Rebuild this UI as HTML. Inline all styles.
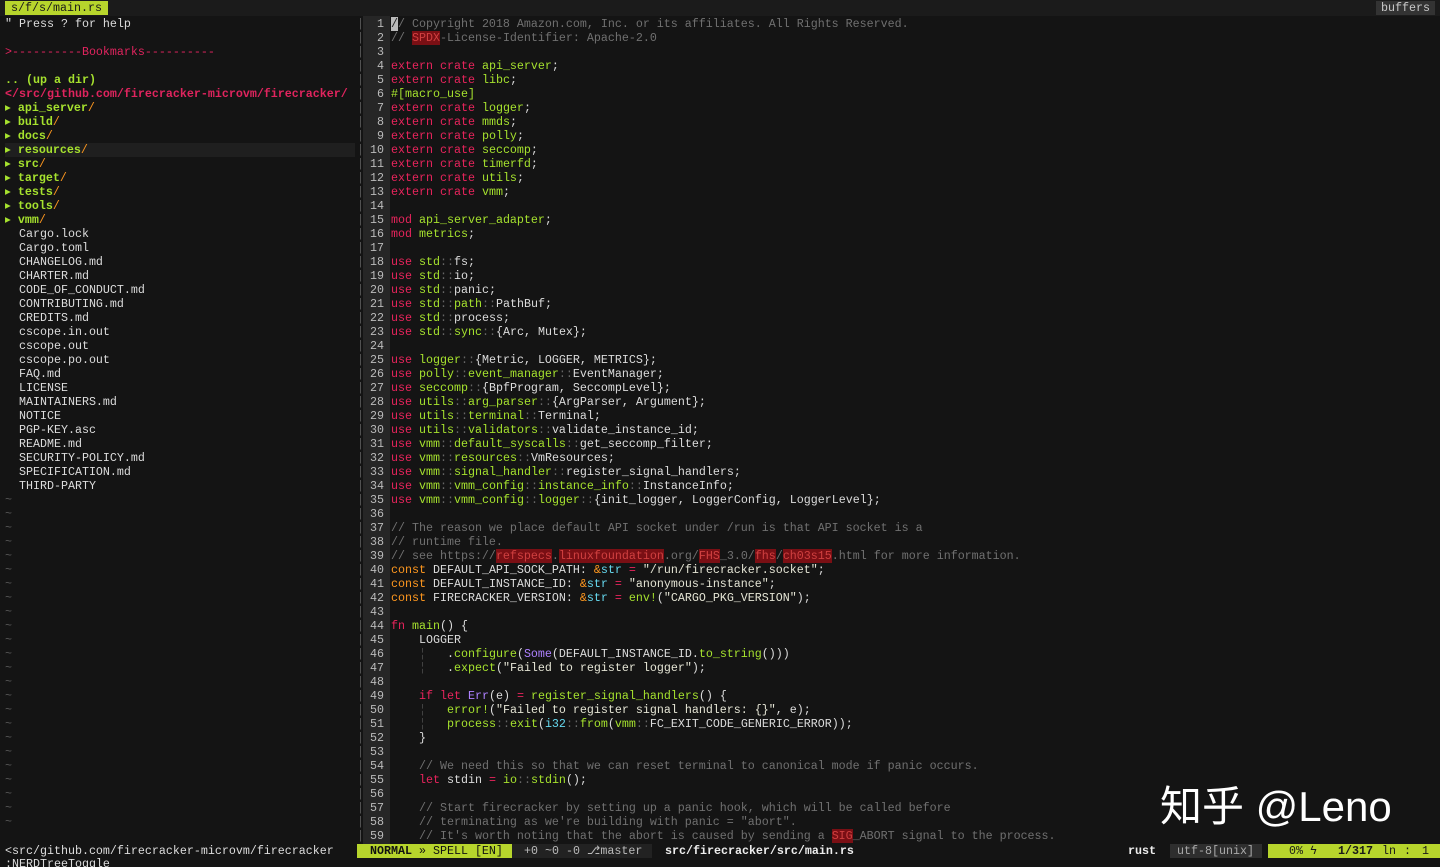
<!DOCTYPE html>
<html><head><meta charset="utf-8">
<style>
*{margin:0;padding:0;box-sizing:border-box}
html,body{width:1440px;height:867px;overflow:hidden;background:#141414}
body{position:relative;font-family:"Liberation Mono",monospace;font-size:11.67px;color:#dcdcdc}
pre{font-family:inherit;font-size:inherit;line-height:14px;position:absolute;white-space:pre}
#tab{position:absolute;left:0;top:0;width:1440px;height:16px;background:#1b1b1b}
.tabl{position:absolute;left:5px;top:1px;height:14px;line-height:14px;padding:0 6px;background:#b7d52c;color:#1a1a1a}
.buf{position:absolute;right:5px;top:1px;height:14px;line-height:14px;padding:0 5px;background:#333;color:#c8c8c8}
#tree{left:5px;top:17px}
#sep{left:357px;top:17px;color:#555}
#nums{left:363px;top:16px;width:27px;background:#262626;color:#bbb;text-align:right;padding-right:6px;padding-top:1px;height:828px}
#code{left:391px;top:17px}
.k{color:#e8245c}.g{color:#a6e22e}.o{color:#fd971f}.c{color:#707070}.b{color:#66d9ef}.p{color:#ae81ff}.s{color:#e4e4d4}.d{color:#666}.e{background:#7a0f14;color:#d04040}
.dir{color:#a6e22e;font-weight:bold}.sl{color:#fd971f}.pk{color:#e0245e}.tl{color:#555}.gd{color:#444}
.sel{background:#1f1f1f;display:inline-block;width:350px}
#status{position:absolute;left:0;top:844px;width:1440px;height:14px;line-height:14px}
#status span{position:absolute;top:0;height:14px}
.wm{position:absolute;left:1160px;top:780px;font-family:"Liberation Sans","Noto Sans CJK SC",sans-serif;font-size:42px;color:#fff;line-height:54px}
</style></head><body>
<div id="tab"><span class="tabl">s/f/s/main.rs</span><span class="buf">buffers</span></div>
<pre id="tree">" Press ? for help

<span class="pk">&gt;----------Bookmarks----------</span>

<span class="dir">.. (up a dir)</span>
<span class="pk" style="font-weight:bold">&lt;/src/github.com/firecracker-microvm/firecracker/</span>
<span class="g">▸</span> <span class="dir">api_server</span><span class="sl">/</span>
<span class="g">▸</span> <span class="dir">build</span><span class="sl">/</span>
<span class="g">▸</span> <span class="dir">docs</span><span class="sl">/</span>
<span class="sel"><span class="g">▸</span> <span class="dir">resources</span><span class="sl">/</span></span>
<span class="g">▸</span> <span class="dir">src</span><span class="sl">/</span>
<span class="g">▸</span> <span class="dir">target</span><span class="sl">/</span>
<span class="g">▸</span> <span class="dir">tests</span><span class="sl">/</span>
<span class="g">▸</span> <span class="dir">tools</span><span class="sl">/</span>
<span class="g">▸</span> <span class="dir">vmm</span><span class="sl">/</span>
  Cargo.lock
  Cargo.toml
  CHANGELOG.md
  CHARTER.md
  CODE_OF_CONDUCT.md
  CONTRIBUTING.md
  CREDITS.md
  cscope.in.out
  cscope.out
  cscope.po.out
  FAQ.md
  LICENSE
  MAINTAINERS.md
  NOTICE
  PGP-KEY.asc
  README.md
  SECURITY-POLICY.md
  SPECIFICATION.md
  THIRD-PARTY
<span class="tl">~
~
~
~
~
~
~
~
~
~
~
~
~
~
~
~
~
~
~
~
~
~
~
~</span></pre>
<pre style="left:5px;top:844px;color:#ddd">&lt;src/github.com/firecracker-microvm/firecracker</pre>
<pre style="left:5px;top:857px;color:#ddd">:NERDTreeToggle</pre>
<pre id="sep">|
|
|
|
|
|
|
|
|
|
|
|
|
|
|
|
|
|
|
|
|
|
|
|
|
|
|
|
|
|
|
|
|
|
|
|
|
|
|
|
|
|
|
|
|
|
|
|
|
|
|
|
|
|
|
|
|
|
|</pre>
<pre id="nums">1
2
3
4
5
6
7
8
9
10
11
12
13
14
15
16
17
18
19
20
21
22
23
24
25
26
27
28
29
30
31
32
33
34
35
36
37
38
39
40
41
42
43
44
45
46
47
48
49
50
51
52
53
54
55
56
57
58
59</pre>
<pre id="code"><span style="background:#bbb;color:#222">/</span><span class="c">/ Copyright 2018 Amazon.com, Inc. or its affiliates. All Rights Reserved.</span>
<span class="c">// <span class="e">SPDX</span>-License-Identifier: Apache-2.0</span>

<span class="k">extern crate</span> <span class="g">api_server</span>;
<span class="k">extern crate</span> <span class="g">libc</span>;
<span class="g">#[macro_use]</span>
<span class="k">extern crate</span> <span class="g">logger</span>;
<span class="k">extern crate</span> <span class="g">mmds</span>;
<span class="k">extern crate</span> <span class="g">polly</span>;
<span class="k">extern crate</span> <span class="g">seccomp</span>;
<span class="k">extern crate</span> <span class="g">timerfd</span>;
<span class="k">extern crate</span> <span class="g">utils</span>;
<span class="k">extern crate</span> <span class="g">vmm</span>;

<span class="k">mod</span> <span class="g">api_server_adapter</span>;
<span class="k">mod</span> <span class="g">metrics</span>;

<span class="k">use</span> <span class="g">std</span><span class="d">::</span>fs;
<span class="k">use</span> <span class="g">std</span><span class="d">::</span>io;
<span class="k">use</span> <span class="g">std</span><span class="d">::</span>panic;
<span class="k">use</span> <span class="g">std</span><span class="d">::</span><span class="g">path</span><span class="d">::</span>PathBuf;
<span class="k">use</span> <span class="g">std</span><span class="d">::</span>process;
<span class="k">use</span> <span class="g">std</span><span class="d">::</span><span class="g">sync</span><span class="d">::</span>{Arc, Mutex};

<span class="k">use</span> <span class="g">logger</span><span class="d">::</span>{Metric, LOGGER, METRICS};
<span class="k">use</span> <span class="g">polly</span><span class="d">::</span><span class="g">event_manager</span><span class="d">::</span>EventManager;
<span class="k">use</span> <span class="g">seccomp</span><span class="d">::</span>{BpfProgram, SeccompLevel};
<span class="k">use</span> <span class="g">utils</span><span class="d">::</span><span class="g">arg_parser</span><span class="d">::</span>{ArgParser, Argument};
<span class="k">use</span> <span class="g">utils</span><span class="d">::</span><span class="g">terminal</span><span class="d">::</span>Terminal;
<span class="k">use</span> <span class="g">utils</span><span class="d">::</span><span class="g">validators</span><span class="d">::</span>validate_instance_id;
<span class="k">use</span> <span class="g">vmm</span><span class="d">::</span><span class="g">default_syscalls</span><span class="d">::</span>get_seccomp_filter;
<span class="k">use</span> <span class="g">vmm</span><span class="d">::</span><span class="g">resources</span><span class="d">::</span>VmResources;
<span class="k">use</span> <span class="g">vmm</span><span class="d">::</span><span class="g">signal_handler</span><span class="d">::</span>register_signal_handlers;
<span class="k">use</span> <span class="g">vmm</span><span class="d">::</span><span class="g">vmm_config</span><span class="d">::</span><span class="g">instance_info</span><span class="d">::</span>InstanceInfo;
<span class="k">use</span> <span class="g">vmm</span><span class="d">::</span><span class="g">vmm_config</span><span class="d">::</span><span class="g">logger</span><span class="d">::</span>{init_logger, LoggerConfig, LoggerLevel};

<span class="c">// The reason we place default API socket under /run is that API socket is a</span>
<span class="c">// runtime file.</span>
<span class="c">// see https://<span class="e">refspecs</span>.<span class="e">linuxfoundation</span>.org/<span class="e">FHS</span>_3.0/<span class="e">fhs</span>/<span class="e">ch03s15</span>.html for more information.</span>
<span class="o">const</span> DEFAULT_API_SOCK_PATH: <span class="o">&amp;</span><span class="b">str</span> <span class="k">=</span> <span class="s">"/run/firecracker.socket"</span>;
<span class="o">const</span> DEFAULT_INSTANCE_ID: <span class="o">&amp;</span><span class="b">str</span> <span class="k">=</span> <span class="s">"anonymous-instance"</span>;
<span class="o">const</span> FIRECRACKER_VERSION: <span class="o">&amp;</span><span class="b">str</span> <span class="k">=</span> <span class="g">env!</span>(<span class="s">"CARGO_PKG_VERSION"</span>);

<span class="k">fn</span> <span class="g">main</span>() {
    LOGGER
    <span class="gd">¦</span>   .<span class="g">configure</span>(<span class="p">Some</span>(DEFAULT_INSTANCE_ID.<span class="g">to_string</span>()))
    <span class="gd">¦</span>   .<span class="g">expect</span>(<span class="s">"Failed to register logger"</span>);

    <span class="k">if let</span> <span class="p">Err</span>(e) <span class="k">=</span> <span class="g">register_signal_handlers</span>() {
    <span class="gd">¦</span>   <span class="g">error!</span>(<span class="s">"Failed to register signal handlers: {}"</span>, e);
    <span class="gd">¦</span>   <span class="g">process</span><span class="d">::</span><span class="g">exit</span>(<span class="b">i32</span><span class="d">::</span><span class="g">from</span>(<span class="g">vmm</span><span class="d">::</span>FC_EXIT_CODE_GENERIC_ERROR));
    }

    <span class="c">// We need this so that we can reset terminal to canonical mode if panic occurs.</span>
    <span class="k">let</span> stdin <span class="k">=</span> <span class="g">io</span><span class="d">::</span><span class="g">stdin</span>();

    <span class="c">// Start firecracker by setting up a panic hook, which will be called before</span>
    <span class="c">// terminating as we're building with panic = "abort".</span>
    <span class="c">// It's worth noting that the abort is caused by sending a <span class="e">SIG</span>_ABORT signal to the process.</span></pre>
<div id="status">
<span style="left:357px;width:155px;background:#b7d52c;color:#111;padding-left:13px"><b>NORMAL</b> » SPELL [EN]</span>
<span style="left:512px;width:140px;background:#222;color:#bbb;padding-left:12px">+0 ~0 -0 ⎇master</span>
<span style="left:665px;color:#eee;font-weight:bold">src/firecracker/src/main.rs</span>
<span style="left:1128px;color:#eee;font-weight:bold">rust</span>
<span style="left:1170px;width:92px;background:#2e2e2e;color:#aaa;padding-left:7px">utf-8[unix]</span>
<span style="left:1268px;width:172px;background:#b7d52c;color:#1a1a1a"></span>
<span style="left:1289px;color:#1a1a1a">0% ϟ</span>
<span style="left:1338px;color:#1a1a1a;font-weight:bold">1/317</span>
<span style="left:1382px;color:#1a1a1a">ln</span>
<span style="left:1404px;color:#1a1a1a">:</span>
<span style="left:1422px;color:#1a1a1a">1</span>
</div>
<div class="wm">知乎 @Leno</div>
</body></html>
